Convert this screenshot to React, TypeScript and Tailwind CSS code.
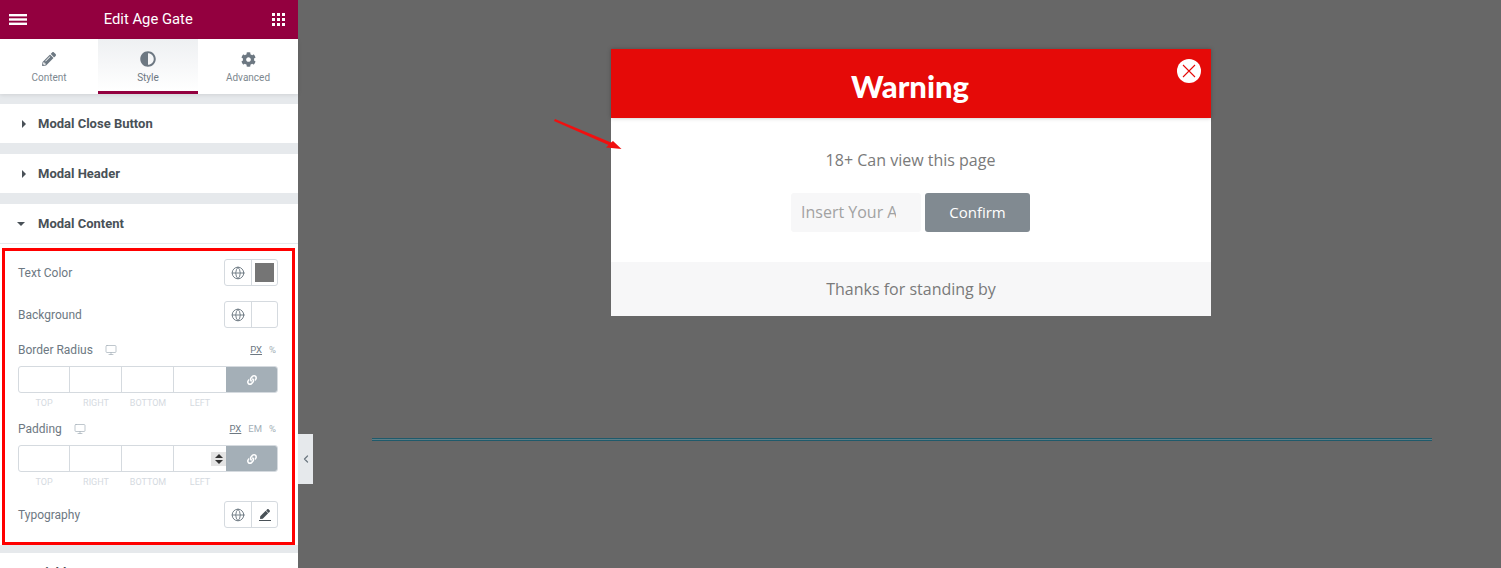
import { ChevronLeft, Globe, Monitor } from "lucide-react";
import { FaAdjust, FaCog, FaLink, FaPen, FaPencilAlt } from "react-icons/fa";

const tabs = [
  { label: "Content", icon: <FaPencilAlt size={14} />, width: "w-[98px]" },
  { label: "Style", icon: <FaAdjust size={16} />, width: "w-[100px]", active: true },
  { label: "Advanced", icon: <FaCog size={15} />, width: "w-[100px]" },
];

const SectionRow = ({ title, open = false }: { title: string; open?: boolean }) => (
  <div className="flex h-[39px] shrink-0 items-center bg-white pl-[18px] text-[13px] font-bold text-[#495157]">
    <span className="flex w-[20px] items-center">
      {open ? (
        <span className="-ml-px border-x-[4px] border-t-[4px] border-x-transparent border-t-[#495157]" />
      ) : (
        <span className="ml-[4px] border-y-[4px] border-l-[4px] border-y-transparent border-l-[#495157]" />
      )}
    </span>
    {title}
  </div>
);

const ControlRow = ({ label, children }: { label: string; children: React.ReactNode }) => (
  <div className="flex h-[27px] items-center justify-between">
    <span className="text-[12px] text-[#6d7882]">{label}</span>
    <div className="flex h-[27px] w-[54px] rounded-[3px] border border-[#d5dadf]">
      <span className="flex w-[27px] items-center justify-center border-r border-[#d5dadf] text-[#6d7882]">
        <Globe size={14} strokeWidth={1.6} />
      </span>
      <span className="flex flex-1 items-center justify-center">{children}</span>
    </div>
  </div>
);

const Dimensions = ({ spinner = false }: { spinner?: boolean }) => (
  <div>
    <div className="flex h-[27px] overflow-hidden rounded-[3px] border border-[#d5dadf]">
      <span className="w-[51px] border-r border-[#d5dadf]" />
      <span className="w-[52px] border-r border-[#d5dadf]" />
      <span className="w-[52px] border-r border-[#d5dadf]" />
      <span className="relative w-[52px]">
        {spinner && (
          <span className="absolute right-0 top-[6px] flex h-[14px] w-[15px] flex-col items-center justify-center gap-[2px] bg-[#e4e4e4]">
            <span className="border-x-[4px] border-b-[4px] border-x-transparent border-b-[#333]" />
            <span className="border-x-[4px] border-t-[4px] border-x-transparent border-t-[#333]" />
          </span>
        )}
      </span>
      <span className="-my-px -mr-px flex flex-1 items-center justify-center bg-[#a4afb7] text-white">
        <FaLink size={10} />
      </span>
    </div>
    <div className="mt-[3px] flex text-center text-[9px] uppercase leading-[14px] text-[#d5dadf]">
      <span className="w-[52px]">Top</span>
      <span className="w-[52px]">Right</span>
      <span className="w-[52px]">Bottom</span>
      <span className="w-[52px]">Left</span>
    </div>
  </div>
);

const DimensionHead = ({ label, units }: { label: string; units: string[] }) => (
  <div className="flex h-[14px] items-center text-[12px] text-[#6d7882]">
    {label}
    <Monitor size={12} strokeWidth={1.4} className="ml-[12px] text-[#a4afb7]" />
    <div className="ml-auto mr-[2px] flex gap-[7px] pt-px text-[9.5px] text-[#a4afb7]">
      {units.map((unit, i) => (
        <span key={unit} className={i === 0 ? "text-[#6d7882] underline" : ""}>
          {unit}
        </span>
      ))}
    </div>
  </div>
);

export default function App() {
  return (
    <div className="flex h-[568px] w-[1501px] overflow-hidden bg-[#676767] font-['Roboto',sans-serif]">
      <aside className="flex h-full w-[298px] shrink-0 flex-col bg-[#e6e9ec]">
        <header className="flex h-[39px] shrink-0 items-center justify-between bg-[#93003f] pl-[9px] pr-[13px] text-white">
          <svg width="18" height="13" viewBox="0 0 18 13" fill="currentColor">
            <rect y="1" width="18" height="2.4" />
            <rect y="5.3" width="18" height="2.4" />
            <rect y="9.6" width="18" height="2.4" />
          </svg>
          <span className="mr-[2px] text-[14.8px] leading-none">Edit Age Gate</span>
          <div className="grid grid-cols-3 gap-[1.5px]">
            {Array.from({ length: 9 }).map((_, i) => (
              <span key={i} className="size-[3.5px] bg-white" />
            ))}
          </div>
        </header>

        <nav className="relative flex h-[55px] shrink-0 bg-white shadow-[0_1px_4px_rgba(0,0,0,0.1)]">
          {tabs.map((tab) => (
            <div
              key={tab.label}
              className={`flex flex-col items-center pt-[12px] text-[10px] leading-[14px] ${tab.width} ${
                tab.active
                  ? "border-b-[3px] border-[#93003f] bg-gradient-to-b from-[#eef0f2] to-white text-[#6d7882]"
                  : "text-[#7d8890]"
              }`}
            >
              <span className="flex h-[16px] items-center text-[#6d7882]">{tab.icon}</span>
              <span className="mt-[4px]">{tab.label}</span>
            </div>
          ))}
        </nav>

        <div className="mt-[10px] flex flex-col gap-[11px]">
          <SectionRow title="Modal Close Button" />
          <SectionRow title="Modal Header" />
        </div>

        <section className="mt-[11px] bg-white">
          <SectionRow title="Modal Content" open />
          <div className="h-px bg-[#e6e9ec]" />
          <div className="ml-[2px] mr-[3px] mt-[4px] border-[3px] border-[#ff0000] pb-[14px] pl-[13px] pr-[14px] pt-[8px]">
            <ControlRow label="Text Color">
              <span className="size-[19px] bg-[#757575]" />
            </ControlRow>
            <div className="mt-[15px]">
              <ControlRow label="Background">{null}</ControlRow>
            </div>
            <div className="mt-[15px]">
              <DimensionHead label="Border Radius" units={["PX", "%"]} />
              <div className="mt-[9px]">
                <Dimensions />
              </div>
            </div>
            <div className="mt-[12px]">
              <DimensionHead label="Padding" units={["PX", "EM", "%"]} />
              <div className="mt-[9px]">
                <Dimensions spinner />
              </div>
            </div>
            <div className="mt-[12px]">
              <ControlRow label="Typography">
                <span className="flex flex-col items-center text-[#495157]">
                  <FaPen size={10} />
                  <span className="mt-px h-px w-[12px] bg-[#495157]" />
                </span>
              </ControlRow>
            </div>
          </div>
        </section>

        <div className="mt-[8px] flex-1 bg-white">
          <SectionRow title="Field" />
        </div>
      </aside>

      <main className="relative flex-1 pl-[313px] pt-[49px]">
        <div className="absolute left-0 top-[434px] flex h-[50px] w-[15px] items-center justify-center bg-[#e6e9ec] text-[#6d7882]">
          <ChevronLeft size={12} strokeWidth={2.5} />
        </div>

        <div className="w-[600px] font-['Open_Sans',sans-serif]">
          <div className="relative flex h-[69px] items-center justify-center bg-[#e50a08] pr-[2px] pt-[5px] shadow-[0_0_4px_rgba(0,0,0,0.25)]">
            <h1 className="font-['Lato',sans-serif] text-[31px] font-black leading-none text-white">Warning</h1>
            <button className="absolute right-[10px] top-[10px] flex size-[24px] items-center justify-center rounded-full bg-white text-[#e50a08]">
              <svg width="14" height="14" viewBox="0 0 14 14" stroke="currentColor" strokeWidth="1.1" fill="none">
                <path d="M1 1 13 13M13 1 1 13" />
              </svg>
            </button>
          </div>
          <div className="flex h-[144px] flex-col items-center bg-white pr-px pt-[31px] text-[16px] text-[#7a7a7a]">
            <p className="leading-[22px]">18+ Can view this page</p>
            <div className="mt-[22px] flex items-center gap-[4px]">
              <span className="flex h-[39px] w-[130px] items-center overflow-hidden rounded-[3px] bg-[#f7f7f8] pb-[2px] pl-[10px] text-[#a2a2a2]">
                <span className="w-[95px] overflow-hidden whitespace-nowrap">Insert Your Age</span>
              </span>
              <button className="h-[39px] w-[105px] rounded-[3px] bg-[#818a91] text-[15px] text-white">Confirm</button>
            </div>
          </div>
          <div className="flex h-[54px] items-center justify-center bg-[#f7f7f8] text-[16px] text-[#7a7a7a]">
            Thanks for standing by
          </div>
        </div>

        <div className="ml-[-239px] mt-[122px] h-[3px] w-[1060px] border-y border-[#1f5a6b] bg-[#5d7f88]" />

        <svg className="absolute left-[254px] top-[118px]" width="72" height="34" viewBox="0 0 72 34" fill="#f01010">
          <path d="M2 3 3 1 59 24.5 61 23 69.5 31 54 29.5 56.5 27Z" />
        </svg>
      </main>
    </div>
  );
}
